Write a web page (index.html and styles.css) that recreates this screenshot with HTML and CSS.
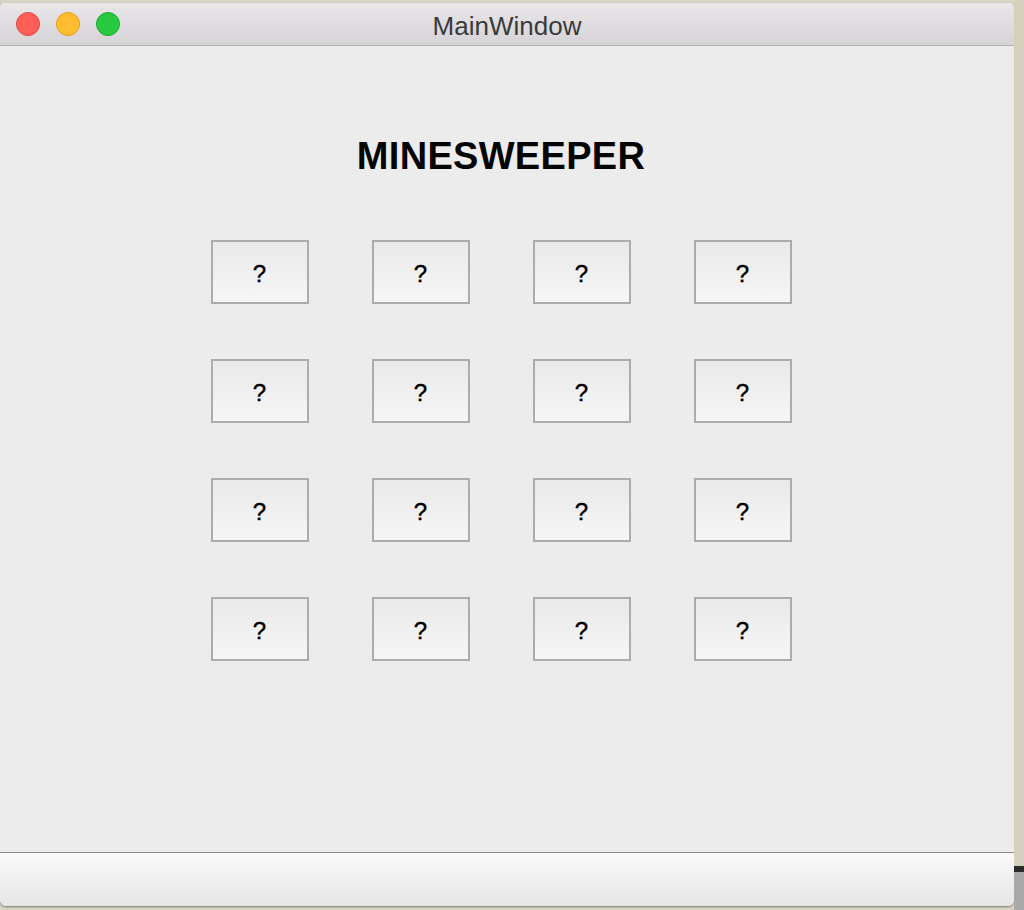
FILE: index.html
```html
<!DOCTYPE html>
<html>
<head>
<meta charset="utf-8">
<link rel="stylesheet" href="styles.css">
</head>
<body>
<div class="desk">
  <div class="window">
    <div class="titlebar">
      <div class="lights">
        <span class="light red"></span>
        <span class="light yellow"></span>
        <span class="light green"></span>
      </div>
      <div class="wtitle">MainWindow</div>
    </div>
    <div class="content">
      <h1 class="game-title">MINESWEEPER</h1>
      <div class="board">
        <button class="cell">?</button><button class="cell">?</button><button class="cell">?</button><button class="cell">?</button>
        <button class="cell">?</button><button class="cell">?</button><button class="cell">?</button><button class="cell">?</button>
        <button class="cell">?</button><button class="cell">?</button><button class="cell">?</button><button class="cell">?</button>
        <button class="cell">?</button><button class="cell">?</button><button class="cell">?</button><button class="cell">?</button>
      </div>
    </div>
    <div class="statusbar"></div>
  </div>
  <div class="side">
    <div class="side-top"></div>
    <div class="side-line"></div>
    <div class="side-bottom"></div>
  </div>
</div>
</body>
</html>
```
FILE: styles.css
```css
html, body {
  margin: 0;
  padding: 0;
}
body {
  width: 1024px;
  height: 910px;
  overflow: hidden;
  background: #d9d5c6;
  font-family: "Liberation Sans", Arial, sans-serif;
}
.desk {
  display: flex;
  height: 910px;
  background: #d8d4c4;
}
.window {
  margin-top: 3px;
  width: 1014px;
  height: 903px;
  display: flex;
  flex-direction: column;
  border-radius: 5px 5px 6px 6px;
  overflow: hidden;
  background: #ececec;
  box-shadow: 0 1px 2px rgba(0,0,0,0.45);
  flex-shrink: 0;
}
.titlebar {
  height: 42px;
  flex-shrink: 0;
  display: flex;
  align-items: center;
  position: relative;
  background: linear-gradient(#e9e7e9, #d5d3d5);
  border-bottom: 1px solid #b3b1b3;
}
.lights {
  display: flex;
  gap: 16px;
  padding-left: 16px;
}
.light {
  width: 24px;
  height: 24px;
  border-radius: 50%;
  display: block;
  box-sizing: border-box;
}
.red { background: #fd5f57; border: 1px solid #e2463f; }
.yellow { background: #febc2e; border: 1px solid #e1a116; }
.green { background: #28c840; border: 1px solid #1aab29; }
.wtitle {
  position: absolute;
  left: 0;
  right: 0;
  top: 8px;
  text-align: center;
  font-size: 26px;
  line-height: 30px;
  color: #3a3a3a;
  font-family: "Liberation Sans", Arial, sans-serif;
}
.content {
  flex: 1;
  display: flex;
  flex-direction: column;
  align-items: center;
  padding-right: 12px;
}
.game-title {
  margin: 88px 0 0 0;
  font-size: 38px;
  line-height: 44px;
  font-weight: bold;
  color: #050505;
  letter-spacing: 0.3px;
}
.board {
  margin-top: 62px;
  display: grid;
  grid-template-columns: repeat(4, 98px);
  grid-auto-rows: 64px;
  column-gap: 63px;
  row-gap: 55px;
}
.cell {
  width: 98px;
  height: 64px;
  margin: 0;
  padding: 0;
  border: 2px solid #acacac;
  background: linear-gradient(#e9e9e9, #f6f6f6);
  font-family: "Liberation Sans", Arial, sans-serif;
  font-size: 24px;
  color: #000;
  -webkit-text-stroke: 0.4px #000;
  display: flex;
  align-items: center;
  justify-content: center;
  padding-top: 3px;
}
.statusbar {
  height: 53px;
  flex-shrink: 0;
  border-top: 1px solid #8c8c8c;
  background: linear-gradient(#f9f9f9, #e6e6e6);
}
.side {
  flex: 1;
  display: flex;
  flex-direction: column;
}
.side-top {
  height: 866px;
  background: #d6d1bf;
}
.side-line {
  height: 6px;
  background: #2c2c2a;
}
.side-bottom {
  flex: 1;
  background: #a9a9a9;
}
```
